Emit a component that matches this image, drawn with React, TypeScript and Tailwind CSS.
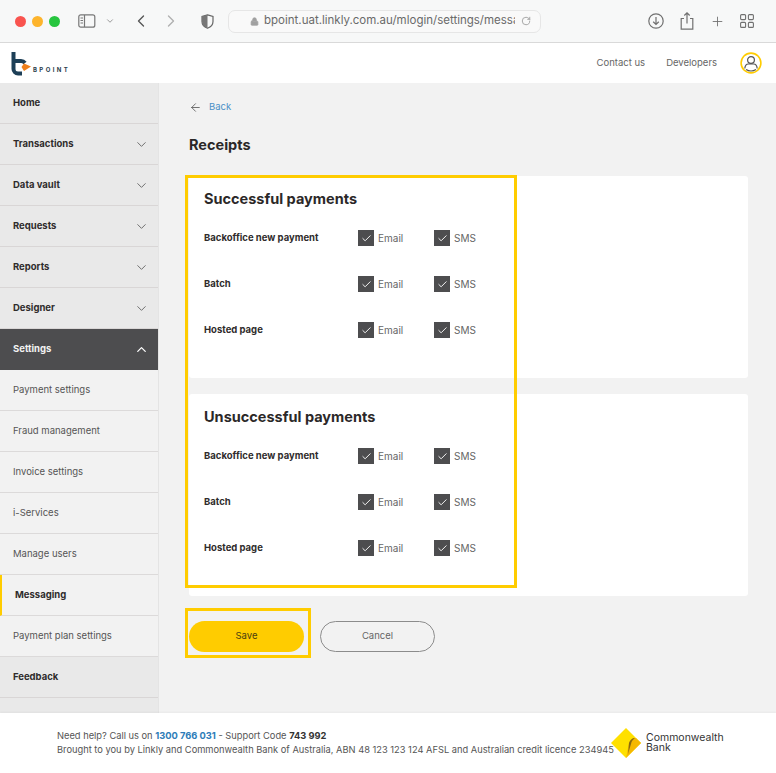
import { ArrowLeft, Check, ChevronDown, ChevronLeft, ChevronRight, ChevronUp, Lock, Plus, RotateCw } from 'lucide-react';

const font = "font-['Inter','Liberation_Sans',sans-serif]";

function NavItem({ label, chevron, active }: { label: string; chevron?: 'down' | 'up'; active?: boolean }) {
  return (
    <div
      className={`flex h-[41px] items-center justify-between border-b pl-[13px] pr-[9px] text-[9.5px] font-bold ${
        active ? 'border-[#4d4d4f] bg-[#4d4d4f] text-[#f2f2f2]' : 'border-[#d9d6d6] text-[#2f2c2c]'
      }`}
    >
      <span>{label}</span>
      {chevron === 'down' && <ChevronDown className="h-[15px] w-[15px] text-[#666]" strokeWidth={1.5} />}
      {chevron === 'up' && <ChevronUp className="h-[15px] w-[15px] text-white" strokeWidth={2} />}
    </div>
  );
}

function SubItem({ label, current }: { label: string; current?: boolean }) {
  return (
    <div
      className={`flex h-[41px] items-center border-b border-[#dcdada] bg-[#f2f2f2] pl-[13px] text-[9.5px] ${
        current ? 'border-l-2 border-l-[#ffcc00] pl-[11px] font-bold text-[#2f2c2c]' : 'text-[#555]'
      }`}
    >
      {label}
    </div>
  );
}

function Tick({ label }: { label: string }) {
  return (
    <div className="flex items-center gap-[4px]">
      <span className="flex h-[16px] w-[16px] items-center justify-center bg-[#4d4d4f]">
        <Check className="h-[11px] w-[11px] text-white" strokeWidth={2} />
      </span>
      <span className="text-[10px] text-[#666]">{label}</span>
    </div>
  );
}

function Row({ label }: { label: string }) {
  return (
    <div className="flex h-[46px] items-center pb-[16px]">
      <span className="w-[154px] text-[9.5px] font-bold text-[#2f2c2c]">{label}</span>
      <div className="w-[76px]">
        <Tick label="Email" />
      </div>
      <Tick label="SMS" />
    </div>
  );
}

function ReceiptCard({ title }: { title: string }) {
  return (
    <section className="h-[202px] rounded-[3px] bg-white pl-[15px] pt-[14px]">
      <h2 className="mb-[15px] text-[14.5px] leading-[18px] font-bold text-[#2b2828]">{title}</h2>
      <Row label="Backoffice new payment" />
      <Row label="Batch" />
      <Row label="Hosted page" />
    </section>
  );
}

function BrowserBar() {
  return (
    <div className="flex h-[43px] items-center border-b border-[#d9d9d9] bg-[#f7f8f8] text-[#6e6e6e]">
      <div className="ml-[15px] flex gap-[6px]">
        <span className="h-[11px] w-[11px] rounded-full bg-[#f9544f]" />
        <span className="h-[11px] w-[11px] rounded-full bg-[#fdb42c]" />
        <span className="h-[11px] w-[11px] rounded-full bg-[#27c53f]" />
      </div>
      <svg className="ml-[18px] h-[14px] w-[18px]" viewBox="0 0 18 14" fill="none" stroke="#777" strokeWidth="1.2">
        <rect x="0.8" y="0.8" width="16" height="12.4" rx="2" />
        <path d="M6.5 1v12M2.5 4h2.5M2.5 6.5h2.5M2.5 9h2.5" />
      </svg>
      <ChevronDown className="ml-[9px] h-[10px] w-[10px] text-[#888]" strokeWidth={2} />
      <ChevronLeft className="ml-[16px] h-[20px] w-[20px] text-[#555]" strokeWidth={1.6} />
      <ChevronRight className="ml-[10px] h-[20px] w-[20px] text-[#b0b0b0]" strokeWidth={1.6} />
      <svg className="ml-[20px] h-[15px] w-[13px]" viewBox="0 0 13 15" fill="none">
        <path d="M6.5 0.8 12 2.4v5c0 3.4-2.4 5.6-5.5 6.8C3.4 13 1 10.8 1 7.4v-5z" stroke="#666" strokeWidth="1.2" />
        <path d="M6.5 0.8 1 2.4v5c0 3.4 2.4 5.6 5.5 6.8z" fill="#777" />
      </svg>
      <div className="relative ml-[14px] flex h-[23px] w-[313px] items-center rounded-[7px] border border-[#e6e6e6] bg-[#f9f9f9] pl-[21px] text-[11.5px] text-[#6a6a6a]">
        <Lock className="h-[9px] w-[9px] fill-[#a0a0a0] text-[#a0a0a0]" />
        <span className="ml-[5px] w-[251px] overflow-hidden whitespace-nowrap">bpoint.uat.linkly.com.au/mlogin/settings/messaging</span>
        <RotateCw className="ml-[6px] h-[10px] w-[10px] text-[#999]" />
      </div>
      <svg className="ml-[107px] h-[16px] w-[16px]" viewBox="0 0 16 16" fill="none" stroke="#707070" strokeWidth="1.2">
        <circle cx="8" cy="8" r="7.2" />
        <path d="M8 4v7.5M5.2 8.8 8 11.5l2.8-2.7" />
      </svg>
      <svg className="ml-[16px] h-[18px] w-[14px]" viewBox="0 0 14 18" fill="none" stroke="#707070" strokeWidth="1.2">
        <path d="M4 6.5H1.2v10.7h11.6V6.5H10M7 11.5V1M4.3 3.5 7 .9l2.7 2.6" />
      </svg>
      <Plus className="ml-[16px] h-[15px] w-[15px] text-[#707070]" strokeWidth={1.4} />
      <svg className="ml-[15px] h-[14px] w-[14px]" viewBox="0 0 14 14" fill="none" stroke="#707070" strokeWidth="1.1">
        <rect x="0.6" y="0.6" width="5" height="5" rx="1" />
        <rect x="8.4" y="0.6" width="5" height="5" rx="1" />
        <rect x="0.6" y="8.4" width="5" height="5" rx="1" />
        <rect x="8.4" y="8.4" width="5" height="5" rx="1" />
      </svg>
    </div>
  );
}

function TopHeader() {
  return (
    <header className="flex h-[40px] items-center justify-between bg-white pl-[11px] pr-[14px]">
      <div className="flex items-end">
        <svg className="h-[25px] w-[21px]" viewBox="0 0 21 25" fill="none">
          <path d="M2.5 1v17a4.5 4.5 0 0 0 4.5 4.5h4" stroke="#1d3f57" strokeWidth="4" />
          <path d="M4 10h6a5 5 0 0 1 4 2" stroke="#1d3f57" strokeWidth="4" />
          <path d="M13 12.5 20 15.5 13 20 10.5 16z" fill="#ee7f1c" />
        </svg>
        <span className="mb-[3px] ml-[1px] text-[6px] leading-none font-bold tracking-[2.4px] text-[#2c3e4c]">BPOINT</span>
      </div>
      <div className="flex items-center text-[9.5px] text-[#666]">
        <span>Contact us</span>
        <span className="ml-[21px]">Developers</span>
        <svg className="ml-[23px] h-[22px] w-[22px]" viewBox="0 0 22 22" fill="none">
          <circle cx="11" cy="11" r="9.9" stroke="#ffcc00" strokeWidth="1.6" />
          <circle cx="11" cy="8" r="3.4" stroke="#555" strokeWidth="1.2" />
          <path d="M4.8 16.5c.3-3 2-4.5 3.5-4.5h5.4c1.500 0 3.200 1.500 3.500 4.500M6 17.500c3 1.800 7 1.800 10 0" stroke="#555" strokeWidth="1.2" />
        </svg>
      </div>
    </header>
  );
}

function Sidebar() {
  return (
    <aside className="h-full w-[159px] shrink-0 border-r border-[#e4e4e4] bg-[#e9e9e9]">
      <NavItem label="Home" />
      <NavItem label="Transactions" chevron="down" />
      <NavItem label="Data vault" chevron="down" />
      <NavItem label="Requests" chevron="down" />
      <NavItem label="Reports" chevron="down" />
      <NavItem label="Designer" chevron="down" />
      <NavItem label="Settings" chevron="up" active />
      <SubItem label="Payment settings" />
      <SubItem label="Fraud management" />
      <SubItem label="Invoice settings" />
      <SubItem label="i-Services" />
      <SubItem label="Manage users" />
      <SubItem label="Messaging" current />
      <SubItem label="Payment plan settings" />
      <NavItem label="Feedback" />
    </aside>
  );
}

function Footer() {
  return (
    <footer className="flex h-[60px] items-center bg-white pl-[57px] shadow-[0_-1px_2px_rgba(0,0,0,0.04)]">
      <div className="w-[554px] text-[9.3px] leading-[14px] text-[#555]">
        <p>
          Need help? Call us on <span className="font-bold text-[#2d7cb8]">1300 766 031</span> - Support Code{' '}
          <span className="font-bold text-[#333]">743 992</span>
        </p>
        <p className="whitespace-nowrap">Brought to you by Linkly and Commonwealth Bank of Australia, ABN 48 123 123 124 AFSL and Australian credit licence 234945</p>
      </div>
      <svg className="h-[30px] w-[30px]" viewBox="0 0 30 30">
        <path d="M15 0 30 15 15 30 0 15z" fill="#ffe000" />
        <path d="M15 30 30 15 25 10c-4 0-6 2-7 5l-3 15z" fill="#f5b800" />
        <path d="M18 15c1-3 3-5 6-5-2 1.500-3.500 3-4 6l-3 10z" fill="#8a6a10" />
      </svg>
      <div className="ml-[5px] text-[10.5px] leading-[10px] text-[#333]">
        <p>Commonwealth</p>
        <p>Bank</p>
      </div>
    </footer>
  );
}

export default function App() {
  return (
    <div className={`flex h-[773px] w-[776px] flex-col overflow-hidden bg-[#f2f2f2] ${font}`}>
      <BrowserBar />
      <TopHeader />
      <div className="flex h-[630px]">
        <Sidebar />
        <main className="relative min-w-0 flex-1 pl-[30px] pr-[28px] pt-[18px]">
          <div className="flex h-[13px] items-center gap-[7px] text-[9.5px] text-[#4a90c8]">
            <ArrowLeft className="h-[13px] w-[13px] text-[#555]" strokeWidth={1.5} />
            <span>Back</span>
          </div>
          <h1 className="mt-[21px] text-[14.5px] leading-[20px] font-bold text-[#2b2828]">Receipts</h1>
          <div className="mt-[21px] flex flex-col gap-[16px]">
            <ReceiptCard title="Successful payments" />
            <ReceiptCard title="Unsuccessful payments" />
          </div>
          <div className="mt-[25px] flex gap-[16px]">
            <button className="h-[31px] w-[115px] rounded-full bg-[#ffcc00] text-[9.5px] text-[#4a3f10]">Save</button>
            <button className="h-[31px] w-[115px] rounded-full border border-[#8c8c8c] text-[9.5px] text-[#666]">Cancel</button>
          </div>
          {/* highlight boxes from the annotated screenshot */}
          <div className="absolute left-[26px] top-[92px] h-[413px] w-[332px] border-[3px] border-[#ffcc00]" />
          <div className="absolute left-[26px] top-[525px] h-[50px] w-[126px] border-[3px] border-[#ffcc00]" />
        </main>
      </div>
      <Footer />
    </div>
  );
}
